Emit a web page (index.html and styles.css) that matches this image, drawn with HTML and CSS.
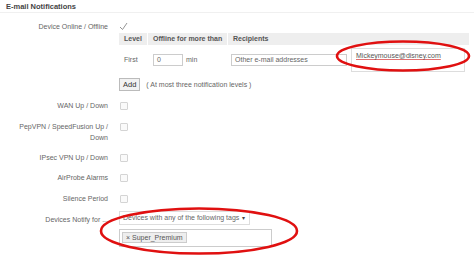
FILE: index.html
```html
<!DOCTYPE html>
<html>
<head>
<meta charset="utf-8">
<link rel="stylesheet" href="styles.css">
</head>
<body>
<div class="page">
  <div class="title">E-mail Notifications</div>
  <div class="form">
    <div class="row r-online">
      <div class="label">Device Online / Offline</div>
      <div class="ctrl"><svg class="check" width="9" height="9" viewBox="0 0 9 9"><path d="M1 5 L3.5 7.5 L8 1" fill="none" stroke="#888" stroke-width="0.9"/></svg></div>
    </div>
    <div class="row r-table">
      <div class="label"></div>
      <div class="ctrl">
        <div class="tbl">
          <div class="thead">
            <div class="c1">Level</div>
            <div class="c2">Offline for more than</div>
            <div class="c3">Recipients</div>
          </div>
          <div class="tbody">
            <div class="c1">First</div>
            <div class="c2"><span class="input num">0</span><span class="min">min</span></div>
            <div class="c3"><span class="input sel">Other e-mail addresses</span><span class="input area"><span class="email">Mickeymouse@disney.com</span></span></div>
          </div>
        </div>
      </div>
    </div>
    <div class="row r-add">
      <div class="label"></div>
      <div class="ctrl"><span class="btn">Add</span><span class="hint">( At most three notification levels )</span></div>
    </div>
    <div class="row r-cb"><div class="label">WAN Up / Down</div><div class="ctrl"><span class="cb"></span></div></div>
    <div class="row r-cb2"><div class="label">PepVPN / SpeedFusion Up /<br>Down</div><div class="ctrl"><span class="cb"></span></div></div>
    <div class="row r-cb"><div class="label">IPsec VPN Up / Down</div><div class="ctrl"><span class="cb"></span></div></div>
    <div class="row r-cb"><div class="label">AirProbe Alarms</div><div class="ctrl"><span class="cb"></span></div></div>
    <div class="row r-cb r-silence"><div class="label">Silence Period</div><div class="ctrl"><span class="cb"></span></div></div>
    <div class="row r-devices">
      <div class="label">Devices Notify for ...</div>
      <div class="ctrl">
        <span class="input dsel">Devices with any of the following tags<span class="caret">▾</span></span>
        <span class="input tags"><span class="chip">× Super_Premium</span></span>
      </div>
    </div>
  </div>
  <svg class="ellipse e1" width="138" height="34" viewBox="0 0 138 34"><ellipse cx="69" cy="17" rx="66" ry="14.5" fill="none" stroke="#e01010" stroke-width="2.6"/></svg>
  <svg class="ellipse e2" width="202" height="50" viewBox="0 0 202 50"><ellipse cx="101" cy="25" rx="98" ry="22.5" fill="none" stroke="#e01010" stroke-width="2.6"/></svg>
</div>
</body>
</html>
```

FILE: styles.css
```css
html, body { margin: 0; padding: 0; background: #fff; }
.page {
  position: relative;
  width: 474px;
  height: 279px;
  font-family: "Liberation Sans", Arial, sans-serif;
  font-size: 7px;
  color: #666;
  overflow: hidden;
}
.title {
  font-weight: bold;
  color: #444;
  font-size: 7.5px;
  padding: 3px 6px 2px;
  border-bottom: 1px solid #f0f0f0;
  height: 7px;
  line-height: 7px;
}
.form { display: flex; flex-direction: column; }
.row { display: grid; grid-template-columns: 108px 1fr; column-gap: 11px; }
.label { text-align: right; line-height: 11px; }
.r-online { margin-top: 8px; height: 11px; align-items: center; }
.r-online .ctrl { display: flex; align-items: center; }
.check { margin-left: 0; }
.r-table { margin-top: 1px; }
.tbl { width: 350px; }
.thead { display: flex; background: #eeeeee; height: 12px; line-height: 12px; font-weight: bold; color: #555; }
.thead > div, .tbody > div { padding-left: 5px; box-sizing: border-box; }
.c1 { width: 28px; }
.c2 { width: 80px; border-left: 1px solid #fff; }
.c3 { flex: 1; border-left: 1px solid #fff; }
.tbody { display: flex; height: 27px; margin-top: 3px; }
.tbody > div { display: flex; align-items: flex-start; }
.tbody .c1 { line-height: 12px; padding-top: 6px; }
.tbody .c2 { border-left-color: transparent; padding-top: 6px; }
.tbody .c3 { border-left-color: transparent; padding-left: 3px; }
.input { display: inline-block; border: 1px solid #ccc; background: #fff; box-sizing: border-box; }
.num { width: 30px; height: 12px; line-height: 10px; padding-left: 3px; }
.min { line-height: 12px; margin-left: 3px; }
.sel { width: 116px; height: 12px; line-height: 10px; padding-left: 3px; margin-top: 6px; }
.area { width: 114px; height: 24px; margin-left: 4px; border-color: #ddd; padding: 3px 0 0 4px; line-height: 8px; }
.email { color: #555; text-decoration: underline solid #e07070; text-decoration-thickness: 0.6px; text-underline-offset: 1px; }
.r-add { margin-top: 3px; height: 13px; }
.r-add .ctrl { display: flex; align-items: center; }
.btn { border: 1px solid #bbb; background: #f2f2f2; color: #333; height: 13px; line-height: 11px; padding: 0 3px; box-sizing: border-box; font-size: 7.5px; }
.hint { margin-left: 6px; }
.cb { display: inline-block; width: 6px; height: 6px; border: 1px solid #d4d4d4; border-radius: 1px; background: #fafafa; margin-left: 1px; }
.r-cb { height: 11px; margin-top: 9px; }
.r-cb .ctrl, .r-cb2 .ctrl { display: flex; align-items: center; height: 11px; }
.r-cb2 { margin-top: 10px; height: 22px; }
.r-silence { margin-top: 10px; }
.r-devices { margin-top: 10px; }
.r-devices .ctrl { display: flex; flex-direction: column; align-items: flex-start; }
.dsel { width: 131px; height: 14px; line-height: 12px; padding-left: 3px; margin-top: -3px; position: relative; border-color: #ddd; }
.caret { position: absolute; right: 4px; top: 0; font-size: 6px; color: #444; }
.tags { width: 153px; height: 18px; margin-top: 4px; padding: 2px; border-color: #ccc; }
.chip { display: inline-block; border: 1px solid #ccc; background: #eee; height: 11px; line-height: 9px; padding: 0 3px; box-sizing: border-box; color: #555; }
.ellipse { position: absolute; }
.e1 { left: 334px; top: 39px; }
.e2 { left: 98px; top: 206px; }
```
